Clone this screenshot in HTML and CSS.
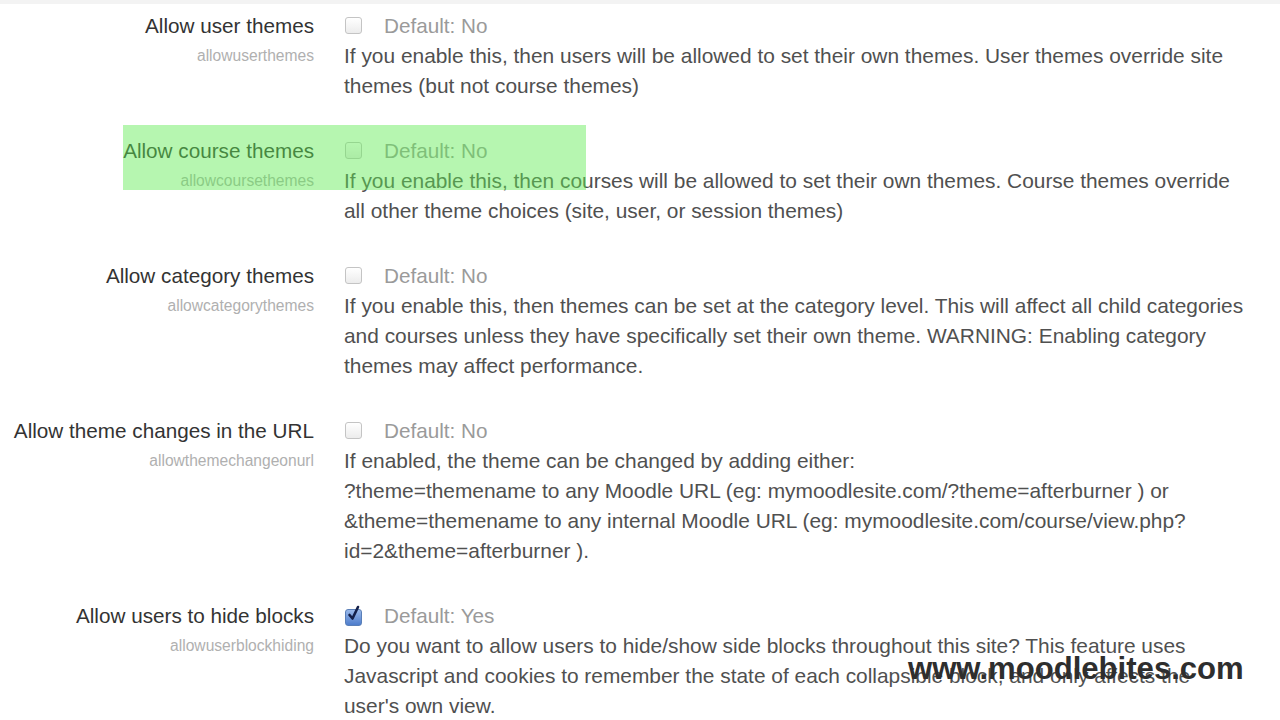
FILE: index.html
```html
<!DOCTYPE html>
<html>
<head>
<meta charset="utf-8">
<link rel="stylesheet" href="styles.css">
</head>
<body>
<div class="page">
  <div class="setting">
    <div class="label">
      <div class="title">Allow user themes</div>
      <div class="code">allowuserthemes</div>
    </div>
    <div class="content">
      <div class="control"><span class="cb"></span><span class="default">Default: No</span></div>
      <div class="desc">If you enable this, then users will be allowed to set their own themes. User themes override site<br>themes (but not course themes)</div>
    </div>
  </div>
  <div class="setting">
    <div class="label">
      <div class="title">Allow course themes</div>
      <div class="code">allowcoursethemes</div>
    </div>
    <div class="content">
      <div class="control"><span class="cb"></span><span class="default">Default: No</span></div>
      <div class="desc">If you enable this, then courses will be allowed to set their own themes. Course themes override<br>all other theme choices (site, user, or session themes)</div>
    </div>
  </div>
  <div class="setting">
    <div class="label">
      <div class="title">Allow category themes</div>
      <div class="code">allowcategorythemes</div>
    </div>
    <div class="content">
      <div class="control"><span class="cb"></span><span class="default">Default: No</span></div>
      <div class="desc">If you enable this, then themes can be set at the category level. This will affect all child categories<br>and courses unless they have specifically set their own theme. WARNING: Enabling category<br>themes may affect performance.</div>
    </div>
  </div>
  <div class="setting">
    <div class="label">
      <div class="title">Allow theme changes in the URL</div>
      <div class="code">allowthemechangeonurl</div>
    </div>
    <div class="content">
      <div class="control"><span class="cb"></span><span class="default">Default: No</span></div>
      <div class="desc">If enabled, the theme can be changed by adding either:<br>?theme=themename to any Moodle URL (eg: mymoodlesite.com/?theme=afterburner ) or<br>&amp;theme=themename to any internal Moodle URL (eg: mymoodlesite.com/course/view.php?<br>id=2&amp;theme=afterburner ).</div>
    </div>
  </div>
  <div class="setting">
    <div class="label">
      <div class="title">Allow users to hide blocks</div>
      <div class="code">allowuserblockhiding</div>
    </div>
    <div class="content">
      <div class="control"><span class="cb checked"><svg viewBox="0 0 18 20" width="18" height="20"><path d="M4.5 11 L7.5 14.5 L13 3" fill="none" stroke="#14204a" stroke-width="2.6" stroke-linecap="round" stroke-linejoin="round"/></svg></span><span class="default">Default: Yes</span></div>
      <div class="desc">Do you want to allow users to hide/show side blocks throughout this site? This feature uses<br>Javascript and cookies to remember the state of each collapsible block, and only affects the<br>user's own view.</div>
    </div>
  </div>
  <div class="highlight"></div>
  <div class="watermark">www.moodlebites.com</div>
</div>
</body>
</html>
```
FILE: styles.css
```css
html, body {
  margin: 0;
  padding: 0;
  background: #ffffff;
}
body {
  font-family: "Liberation Sans", Arial, Helvetica, sans-serif;
  color: #333;
}
.page {
  position: relative;
  width: 1280px;
  height: 720px;
  overflow: hidden;
  border-top: 4px solid #f3f3f3;
  box-sizing: border-box;
  padding-top: 7px;
  display: flex;
  flex-direction: column;
  gap: 35px;
}
.setting {
  display: grid;
  grid-template-columns: 314px 1fr;
  column-gap: 30px;
}
.label {
  text-align: right;
}
.title {
  font-size: 20.7px;
  line-height: 30px;
  color: #333;
  white-space: nowrap;
}
.code {
  font-size: 15.6px;
  line-height: 30px;
  color: #b0b0b0;
}
.content {
  font-size: 20.9px;
  line-height: 30px;
}
.control {
  display: flex;
  align-items: center;
  height: 30px;
}
.cb {
  width: 15px;
  height: 15px;
  border: 1px solid #c4c4c4;
  border-radius: 3px;
  background: linear-gradient(#ffffff, #ececec);
  margin-left: 1px;
  margin-right: 22px;
  position: relative;
  top: -1px;
  flex: none;
}
.cb.checked {
  background: linear-gradient(#9ab9ea, #4e7dcc);
  border-color: #5a7fb8;
  top: 1px;
}
.cb.checked svg {
  position: absolute;
  left: -1px;
  top: -6px;
}
.default {
  color: #9a9a9a;
  font-size: 20.7px;
}
.desc {
  color: #505050;
  white-space: nowrap;
}
.highlight {
  position: absolute;
  left: 123px;
  top: 121px;
  width: 463px;
  height: 65px;
  background: rgba(96, 236, 82, 0.46);
}
.watermark {
  position: absolute;
  left: 908px;
  top: 647px;
  font-size: 31.1px;
  font-weight: bold;
  color: #2e2e2e;
}
```
